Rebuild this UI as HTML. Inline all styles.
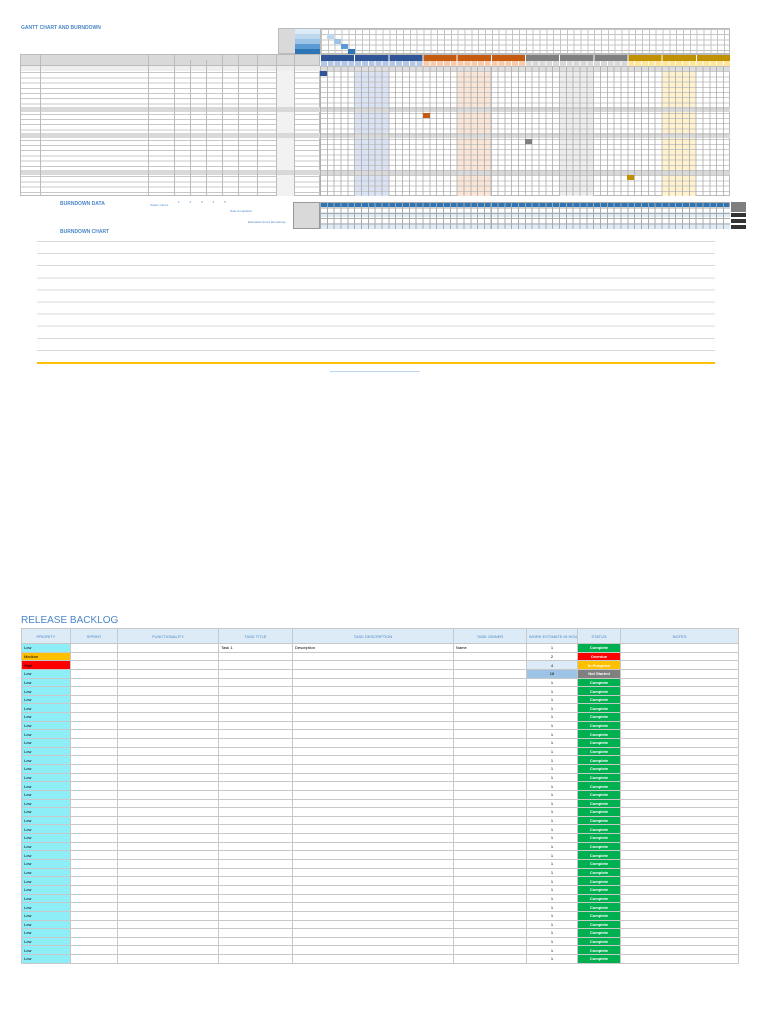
<!DOCTYPE html>
<html><head><meta charset="utf-8">
<style>
*{margin:0;padding:0;box-sizing:border-box}
body{width:768px;height:1024px;background:#fff;position:relative;overflow:hidden;font-family:"Liberation Sans",sans-serif}
.a{position:absolute}
.t{color:#4a86c8;font-size:5px;font-weight:bold}
#bl{position:absolute;left:21px;top:628px;width:717px;border-collapse:collapse;table-layout:fixed;font-size:4px}
#bl td,#bl th{border:1px solid #c8c8c8;height:8.65px;padding:0 2px;overflow:hidden;white-space:nowrap;line-height:7px}
#bl th{background:#ddebf7;color:#4a86c8;font-weight:normal;height:15px;text-align:center}
.p{background:#8eeef8}
.s{background:#00b050;color:#fff;font-weight:bold;text-align:center}
.c{text-align:center}
</style></head><body>

<div class="a t" style="left:21px;top:25px;font-size:5px">GANTT CHART AND BURNDOWN</div>

<!-- top legend -->
<div class="a" style="left:278px;top:28px;width:42px;height:26px;background:#d9d9d9;border:1px solid #bbb"></div>
<div class="a" style="left:295px;top:29px;width:25px;height:5px;background:#ddebf7"></div>
<div class="a" style="left:295px;top:34px;width:25px;height:5px;background:#bdd7ee"></div>
<div class="a" style="left:295px;top:39px;width:25px;height:5px;background:#9dc3e6"></div>
<div class="a" style="left:295px;top:44px;width:25px;height:5px;background:#5b9bd5"></div>
<div class="a" style="left:295px;top:49px;width:25px;height:5px;background:#2e75b6"></div>
<div class="a" style="left:320px;top:28px;width:410px;height:26px;border:1px solid #bbb;background:repeating-linear-gradient(to right,#c4c4c4 0 1px,transparent 1px 6.83px),repeating-linear-gradient(to bottom,#c4c4c4 0 1px,transparent 1px 5.2px)"></div>
<div class="a" style="left:327px;top:34px;width:7px;height:5px;background:#bdd7ee"></div>
<div class="a" style="left:334px;top:39px;width:7px;height:5px;background:#9dc3e6"></div>
<div class="a" style="left:341px;top:44px;width:7px;height:5px;background:#5b9bd5"></div>
<div class="a" style="left:348px;top:49px;width:7px;height:5px;background:#2e75b6"></div>

<!-- left table -->
<div class="a" style="left:20px;top:54px;width:300px;height:12px;background:#d9d9d9;border:1px solid #bbb"></div>
<div class="a" style="left:20px;top:66px;width:300px;height:130px;border:1px solid #bbb;background:repeating-linear-gradient(to bottom,#c8c8c8 0 1px,transparent 1px 5.2px)"></div>
<div class="a" style="left:276px;top:66px;width:18px;height:130px;background:#f2f2f2"></div>
<div class="a" style="left:21px;top:66px;width:299px;height:5px;background:#eee"></div>
<div class="a" style="left:21px;top:107px;width:299px;height:5px;background:#d9d9d9"></div>
<div class="a" style="left:21px;top:133px;width:299px;height:5px;background:#d9d9d9"></div>
<div class="a" style="left:21px;top:170px;width:299px;height:5px;background:#d9d9d9"></div>
<div class="a" style="left:40px;top:54px;width:1px;height:142px;background:#bbb"></div>
<div class="a" style="left:148px;top:54px;width:1px;height:142px;background:#bbb"></div>
<div class="a" style="left:174px;top:54px;width:1px;height:142px;background:#bbb"></div>
<div class="a" style="left:190px;top:60px;width:1px;height:136px;background:#bbb"></div>
<div class="a" style="left:206px;top:60px;width:1px;height:136px;background:#bbb"></div>
<div class="a" style="left:222px;top:54px;width:1px;height:142px;background:#bbb"></div>
<div class="a" style="left:238px;top:54px;width:1px;height:142px;background:#bbb"></div>
<div class="a" style="left:257px;top:54px;width:1px;height:142px;background:#bbb"></div>
<div class="a" style="left:276px;top:54px;width:1px;height:142px;background:#bbb"></div>
<div class="a" style="left:294px;top:54px;width:1px;height:142px;background:#bbb"></div>

<!-- gantt right -->
<div class="a" style="left:320px;top:54px;width:410px;height:142px;border:1px solid #bbb"></div>
<div class="a" style="left:355px;top:66px;width:34px;height:130px;background:#dae3f3"></div>
<div class="a" style="left:457px;top:66px;width:34px;height:130px;background:#fbe5d6"></div>
<div class="a" style="left:560px;top:66px;width:34px;height:130px;background:#ededed"></div>
<div class="a" style="left:662px;top:66px;width:34px;height:130px;background:#fff2cc"></div>
<div class="a" style="left:320px;top:66px;width:410px;height:5px;background:#ddd"></div>
<div class="a" style="left:320px;top:107px;width:410px;height:5px;background:#d9d9d9"></div>
<div class="a" style="left:320px;top:133px;width:410px;height:5px;background:#d9d9d9"></div>
<div class="a" style="left:320px;top:170px;width:410px;height:5px;background:#d9d9d9"></div>
<div class="a" style="left:320px;top:66px;width:410px;height:130px;background:repeating-linear-gradient(to right,rgba(170,170,170,.8) 0 1px,transparent 1px 6.83px),repeating-linear-gradient(to bottom,rgba(190,190,190,.8) 0 1px,transparent 1px 5.2px)"></div>
<div class="a" style="left:320px;top:55px;width:410px;height:6px;background:linear-gradient(to right,#2f5597 0 25%,#c55a11 25% 50%,#7f7f7f 50% 75%,#bf9000 75%)"></div>
<div class="a" style="left:320px;top:61px;width:410px;height:5px;background:linear-gradient(to right,#b4c7e7 0 25%,#f8cbad 25% 50%,#d9d9d9 50% 75%,#ffe699 75%)"></div>
<div class="a" style="left:320px;top:61px;width:410px;height:5px;background:repeating-linear-gradient(to right,#fff 0 1px,transparent 1px 6.83px)"></div>
<div class="a" style="left:320px;top:55px;width:410px;height:6px;background:repeating-linear-gradient(to right,#fff 0 1px,transparent 1px 34.17px)"></div>
<div class="a" style="left:320px;top:71px;width:7px;height:5px;background:#2f5597"></div>
<div class="a" style="left:423px;top:113px;width:7px;height:5px;background:#c55a11"></div>
<div class="a" style="left:525px;top:139px;width:7px;height:5px;background:#7f7f7f"></div>
<div class="a" style="left:627px;top:175px;width:7px;height:5px;background:#bf9000"></div>

<!-- burndown data -->
<div class="a t" style="left:60px;top:201px;font-size:5px">BURNDOWN DATA</div>
<div class="a" style="left:150px;top:203px;font-size:3px;color:#4a86c8">Totals / Hours</div>
<div class="a" style="left:178px;top:200px;width:95px;font-size:3px;color:#4a86c8;word-spacing:9px">1 2 3 4 5</div>
<div class="a" style="left:230px;top:209px;font-size:3px;color:#4a86c8">Date Completed</div>
<div class="a" style="left:248px;top:220px;font-size:3px;color:#4a86c8">Estimated Hours Remaining</div>
<div class="a" style="left:293px;top:202px;width:27px;height:27px;background:#d9d9d9;border:1px solid #999"></div>
<div class="a" style="left:320px;top:202px;width:410px;height:27px;border:1px solid #aaa;background:linear-gradient(#2e75b6 0 5px,#fff 5px)"></div>
<div class="a" style="left:320px;top:207px;width:410px;height:22px;background:linear-gradient(#fff 0 5px,#ddebf7 5px 10px,#fff 10px 16px,#ddebf7 16px)"></div>
<div class="a" style="left:320px;top:202px;width:410px;height:27px;background:repeating-linear-gradient(to right,#aaa 0 1px,transparent 1px 6.83px),repeating-linear-gradient(to bottom,#aaa 0 1px,transparent 1px 5.4px)"></div>
<div class="a" style="left:731px;top:202px;width:15px;height:10px;background:#7f7f7f"></div>
<div class="a" style="left:731px;top:213px;width:15px;height:4px;background:#333"></div>
<div class="a" style="left:731px;top:219px;width:15px;height:4px;background:#333"></div>
<div class="a" style="left:731px;top:225px;width:15px;height:4px;background:#333"></div>

<!-- chart -->
<div class="a t" style="left:60px;top:229px;font-size:5px">BURNDOWN CHART</div>
<div class="a" style="left:37px;top:241px;width:678px;height:122px;background:repeating-linear-gradient(to bottom,#d9d9d9 0 1px,transparent 1px 12.1px)"></div>
<div class="a" style="left:37px;top:362px;width:678px;height:2px;background:#ffc000"></div>
<div class="a" style="left:330px;top:371px;width:90px;height:1px;background:#bdd7ee"></div>

<div class="a" style="left:21px;top:615px;font-size:10px;color:#4a86c8">RELEASE BACKLOG</div>
<table id="bl">
<colgroup><col style="width:49px"><col style="width:47px"><col style="width:101px"><col style="width:74px"><col style="width:161px"><col style="width:73px"><col style="width:51px"><col style="width:43px"><col style="width:118px"></colgroup>
<tr><th>PRIORITY</th><th>SPRINT</th><th>FUNCTIONALITY</th><th>TASK TITLE</th><th>TASK DESCRIPTION</th><th>TASK OWNER</th><th>WORK ESTIMATE IN HOURS</th><th>STATUS</th><th>NOTES</th></tr>
<tr><td class="p">Low</td><td></td><td></td><td>Task 1</td><td>Description</td><td>Name</td><td class="c">1</td><td class="s">Complete</td><td></td></tr>
<tr><td style="background:#ffc000">Medium</td><td></td><td></td><td></td><td></td><td></td><td class="c">2</td><td class="s" style="background:#f00">Overdue</td><td></td></tr>
<tr><td style="background:#f00">High</td><td></td><td></td><td></td><td></td><td></td><td class="c" style="background:#ddebf7">4</td><td class="s" style="background:#ffc000">In Progress</td><td></td></tr>
<tr><td class="p">Low</td><td></td><td></td><td></td><td></td><td></td><td class="c" style="background:#9dc3e6">16</td><td class="s" style="background:#808080">Not Started</td><td></td></tr>
<tr><td class="p">Low</td><td></td><td></td><td></td><td></td><td></td><td class="c">1</td><td class="s">Complete</td><td></td></tr>
<tr><td class="p">Low</td><td></td><td></td><td></td><td></td><td></td><td class="c">1</td><td class="s">Complete</td><td></td></tr>
<tr><td class="p">Low</td><td></td><td></td><td></td><td></td><td></td><td class="c">1</td><td class="s">Complete</td><td></td></tr>
<tr><td class="p">Low</td><td></td><td></td><td></td><td></td><td></td><td class="c">1</td><td class="s">Complete</td><td></td></tr>
<tr><td class="p">Low</td><td></td><td></td><td></td><td></td><td></td><td class="c">1</td><td class="s">Complete</td><td></td></tr>
<tr><td class="p">Low</td><td></td><td></td><td></td><td></td><td></td><td class="c">1</td><td class="s">Complete</td><td></td></tr>
<tr><td class="p">Low</td><td></td><td></td><td></td><td></td><td></td><td class="c">1</td><td class="s">Complete</td><td></td></tr>
<tr><td class="p">Low</td><td></td><td></td><td></td><td></td><td></td><td class="c">1</td><td class="s">Complete</td><td></td></tr>
<tr><td class="p">Low</td><td></td><td></td><td></td><td></td><td></td><td class="c">1</td><td class="s">Complete</td><td></td></tr>
<tr><td class="p">Low</td><td></td><td></td><td></td><td></td><td></td><td class="c">1</td><td class="s">Complete</td><td></td></tr>
<tr><td class="p">Low</td><td></td><td></td><td></td><td></td><td></td><td class="c">1</td><td class="s">Complete</td><td></td></tr>
<tr><td class="p">Low</td><td></td><td></td><td></td><td></td><td></td><td class="c">1</td><td class="s">Complete</td><td></td></tr>
<tr><td class="p">Low</td><td></td><td></td><td></td><td></td><td></td><td class="c">1</td><td class="s">Complete</td><td></td></tr>
<tr><td class="p">Low</td><td></td><td></td><td></td><td></td><td></td><td class="c">1</td><td class="s">Complete</td><td></td></tr>
<tr><td class="p">Low</td><td></td><td></td><td></td><td></td><td></td><td class="c">1</td><td class="s">Complete</td><td></td></tr>
<tr><td class="p">Low</td><td></td><td></td><td></td><td></td><td></td><td class="c">1</td><td class="s">Complete</td><td></td></tr>
<tr><td class="p">Low</td><td></td><td></td><td></td><td></td><td></td><td class="c">1</td><td class="s">Complete</td><td></td></tr>
<tr><td class="p">Low</td><td></td><td></td><td></td><td></td><td></td><td class="c">1</td><td class="s">Complete</td><td></td></tr>
<tr><td class="p">Low</td><td></td><td></td><td></td><td></td><td></td><td class="c">1</td><td class="s">Complete</td><td></td></tr>
<tr><td class="p">Low</td><td></td><td></td><td></td><td></td><td></td><td class="c">1</td><td class="s">Complete</td><td></td></tr>
<tr><td class="p">Low</td><td></td><td></td><td></td><td></td><td></td><td class="c">1</td><td class="s">Complete</td><td></td></tr>
<tr><td class="p">Low</td><td></td><td></td><td></td><td></td><td></td><td class="c">1</td><td class="s">Complete</td><td></td></tr>
<tr><td class="p">Low</td><td></td><td></td><td></td><td></td><td></td><td class="c">1</td><td class="s">Complete</td><td></td></tr>
<tr><td class="p">Low</td><td></td><td></td><td></td><td></td><td></td><td class="c">1</td><td class="s">Complete</td><td></td></tr>
<tr><td class="p">Low</td><td></td><td></td><td></td><td></td><td></td><td class="c">1</td><td class="s">Complete</td><td></td></tr>
<tr><td class="p">Low</td><td></td><td></td><td></td><td></td><td></td><td class="c">1</td><td class="s">Complete</td><td></td></tr>
<tr><td class="p">Low</td><td></td><td></td><td></td><td></td><td></td><td class="c">1</td><td class="s">Complete</td><td></td></tr>
<tr><td class="p">Low</td><td></td><td></td><td></td><td></td><td></td><td class="c">1</td><td class="s">Complete</td><td></td></tr>
<tr><td class="p">Low</td><td></td><td></td><td></td><td></td><td></td><td class="c">1</td><td class="s">Complete</td><td></td></tr>
<tr><td class="p">Low</td><td></td><td></td><td></td><td></td><td></td><td class="c">1</td><td class="s">Complete</td><td></td></tr>
<tr><td class="p">Low</td><td></td><td></td><td></td><td></td><td></td><td class="c">1</td><td class="s">Complete</td><td></td></tr>
<tr><td class="p">Low</td><td></td><td></td><td></td><td></td><td></td><td class="c">1</td><td class="s">Complete</td><td></td></tr>
<tr><td class="p">Low</td><td></td><td></td><td></td><td></td><td></td><td class="c">1</td><td class="s">Complete</td><td></td></tr>
</table>
</body></html>
